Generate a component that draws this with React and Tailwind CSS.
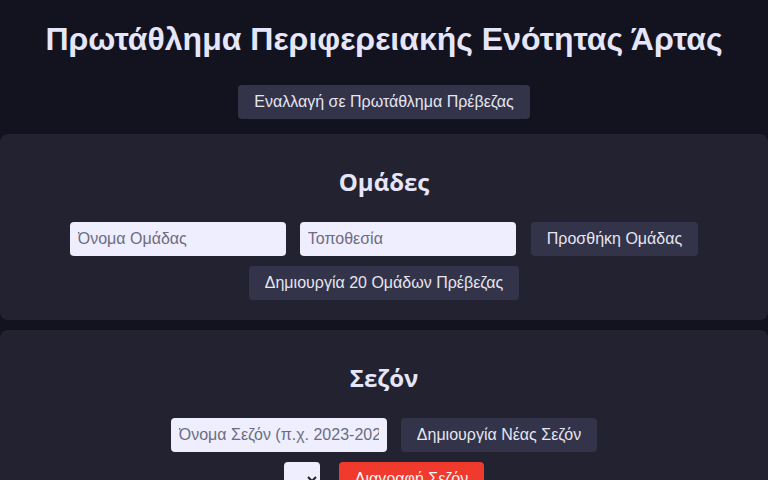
import { useState } from 'react';

function Btn({ children, className = '' }) {
  return (
    <button
      className={`h-[34px] px-4 rounded-[4px] bg-[#33334a] text-[#e6e6f0] text-[16px] ${className}`}
    >
      {children}
    </button>
  );
}

function Field({ placeholder }) {
  return (
    <input
      placeholder={placeholder}
      className="w-[216px] h-[34px] px-2 rounded-[4px] bg-[#eeeeff] text-[16px] text-[#222] placeholder:text-[#6c6c7e] outline-none"
    />
  );
}

export default function App() {
  const [season, setSeason] = useState('');

  return (
    <div className="min-h-[480px] bg-[#131320] text-[#e6e6fa] font-['Liberation_Sans',Arial,sans-serif]">
      <div className="pt-[19px] text-center">
        <h1 className="text-[32px] leading-[40px] font-bold text-[#e6e6fa]">
          Πρωτάθλημα Περιφερειακής Ενότητας Άρτας
        </h1>
        <div className="mt-[26px]">
          <Btn className="w-[292px]">Εναλλαγή σε Πρωτάθλημα Πρέβεζας</Btn>
        </div>
      </div>

      {/* Teams */}
      <section className="mt-[15px] bg-[#222230] rounded-lg pt-[28px] pb-[20px]">
        <h2 className="text-center text-[24px] leading-[40px] font-bold font-['Open_Sans',sans-serif]">
          Ομάδες
        </h2>
        <div className="mt-[20px] flex flex-col items-center gap-[10px]">
          <div className="flex items-center gap-[14px]">
            <Field placeholder="Όνομα Ομάδας" />
            <Field placeholder="Τοποθεσία" />
            <Btn className="ml-px">Προσθήκη Ομάδας</Btn>
          </div>
          <Btn>Δημιουργία 20 Ομάδων Πρέβεζας</Btn>
        </div>
      </section>

      {/* Seasons */}
      <section className="mt-[10px] bg-[#222230] rounded-lg pt-[28px] pb-[20px]">
        <h2 className="text-center text-[24px] leading-[40px] font-bold font-['Open_Sans',sans-serif]">
          Σεζόν
        </h2>
        <div className="mt-[20px] flex flex-col items-center gap-[10px]">
          <div className="flex items-center gap-[14px]">
            <Field placeholder="Όνομα Σεζόν (π.χ. 2023-2024)" />
            <Btn>Δημιουργία Νέας Σεζόν</Btn>
          </div>
          <div className="flex items-center gap-[19px]">
            <select
              value={season}
              onChange={(e) => setSeason(e.target.value)}
              className="w-[36px] h-[34px] rounded-[4px] bg-[#eeeeff] text-[#222] text-[16px]"
            >
              <option value=""></option>
            </select>
            <button className="h-[34px] px-4 rounded-[4px] bg-[#f03a2e] text-[#f5f5f5] text-[16px]">
              Διαγραφή Σεζόν
            </button>
          </div>
        </div>
      </section>
    </div>
  );
}
